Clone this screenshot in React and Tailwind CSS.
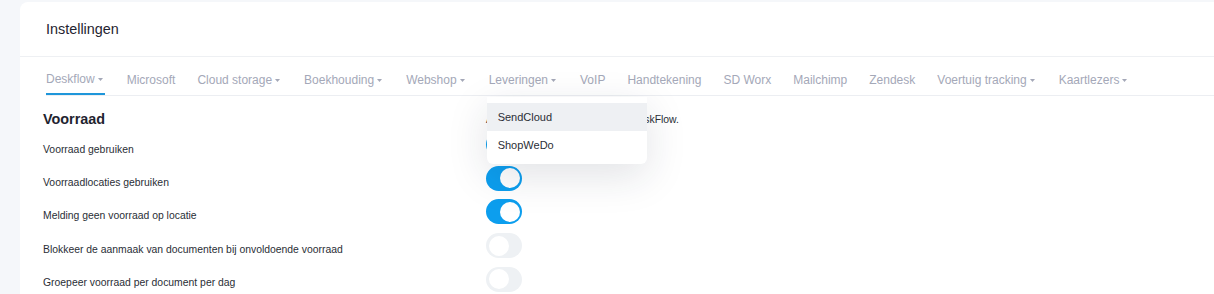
import React from "react";

const tabs = [
  { label: "Deskflow", caret: true, active: true },
  { label: "Microsoft" },
  { label: "Cloud storage", caret: true },
  { label: "Boekhouding", caret: true },
  { label: "Webshop", caret: true },
  { label: "Leveringen", caret: true, open: true },
  { label: "VoIP" },
  { label: "Handtekening" },
  { label: "SD Worx" },
  { label: "Mailchimp" },
  { label: "Zendesk" },
  { label: "Voertuig tracking", caret: true },
  { label: "Kaartlezers", caret: true },
];

const rows = [
  { label: "Voorraad gebruiken", on: true },
  { label: "Voorraadlocaties gebruiken", on: true },
  { label: "Melding geen voorraad op locatie", on: true },
  { label: "Blokkeer de aanmaak van documenten bij onvoldoende voorraad", on: false },
  { label: "Groepeer voorraad per document per dag", on: false },
];

function Caret() {
  return (
    <svg className="ml-[3px] mr-[2px] shrink-0" width="5" height="3" viewBox="0 0 5 3">
      <path d="M0 0 L5 0 L2.5 3 Z" fill="#a4a8b8" />
    </svg>
  );
}

function Toggle({ on }) {
  return (
    <div
      className={
        "w-[36px] h-[25px] rounded-full flex items-center px-[2.5px] " +
        (on ? "bg-[#0c9eee] justify-end" : "bg-[#eef1f4] justify-start")
      }
    >
      <div className="w-[20px] h-[20px] rounded-full bg-white" />
    </div>
  );
}

export default function App() {
  return (
    <div
      className="w-[1214px] h-[294px] overflow-hidden bg-[#f5f7fa] pt-[2px] pl-[20px]"
      style={{ fontFamily: '"Liberation Sans", Arial, sans-serif' }}
    >
      <div className="w-[1230px] h-[320px] bg-white rounded-tl-[8px]">
        <div className="h-[55px] px-[26px] flex items-center border-b border-[#eef0f3]">
          <span className="text-[14.4px] text-[#1f2430] pt-[1px]">Instellingen</span>
        </div>
        <div className="relative mx-[26px] h-[39px] flex gap-[22px] border-b border-[#eceef2]">
          {tabs.map((t) => (
            <div
              key={t.label}
              className={
                "relative h-full flex items-center pt-[8px] text-[12px] text-[#a4a8b8] whitespace-nowrap " +
                (t.active ? "border-b-2 border-[#1e96da] -mb-px" : "")
              }
            >
              <span>{t.label}</span>
              {t.caret && <Caret />}
              {t.open && (
                <div className="absolute left-[-2px] top-[40px] z-10 w-[160px] bg-white rounded-b-[6px] pt-[6px] pb-[5px] shadow-[0_12px_40px_rgba(30,40,60,0.13)]">
                  <div className="h-[28px] flex items-center pl-[11px] bg-[#eef0f3] text-[11px] text-[#2a2e36]">SendCloud</div>
                  <div className="h-[28px] flex items-center pl-[11px] text-[11px] text-[#2a2e36]">ShopWeDo</div>
                </div>
              )}
            </div>
          ))}
        </div>
        <div className="px-[23px] pt-[13px]">
          <div className="flex h-[19px] items-center">
            <div className="w-[443px] text-[14.4px] font-bold text-[#1f2430] pt-[2px]">Voorraad</div>
            <div className="text-[10.4px] text-[#2a2e36] whitespace-nowrap pt-[2px]">Activeer het voorraadbeheer in DeskFlow.</div>
          </div>
          {rows.map((r, i) => (
            <div key={r.label} className="flex h-[33.6px] items-center">
              <div className={"w-[443px] text-[10.4px] text-[#2a2e36] " + (i === 0 ? "pt-[10px]" : "pt-[8px]")}>{r.label}</div>
              <Toggle on={r.on} />
            </div>
          ))}
        </div>
      </div>
    </div>
  );
}
